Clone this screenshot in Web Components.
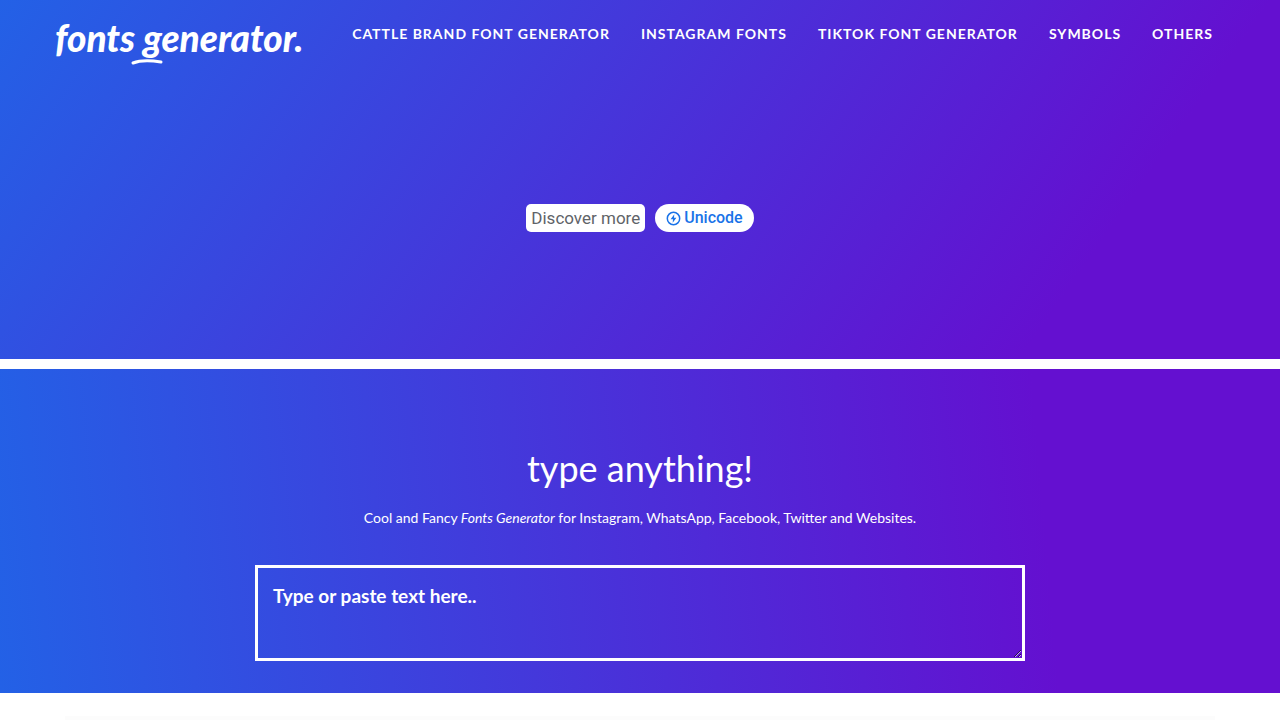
<!DOCTYPE html>
<html lang="en">
<head>
<meta charset="utf-8">
<meta name="viewport" content="width=device-width, initial-scale=1">
<title>Fonts Generator</title>
<style>
body { margin: 0; background: #fff; font-family: Lato, "Open Sans", sans-serif; color: #fff; overflow-x: hidden; }
</style>
</head>
<body>
<site-header>
  <site-logo slot="logo"></site-logo>
  <nav-link href="#cattle">CATTLE BRAND FONT GENERATOR</nav-link>
  <nav-link href="#instagram">INSTAGRAM FONTS</nav-link>
  <nav-link href="#tiktok">TIKTOK FONT GENERATOR</nav-link>
  <nav-link href="#symbols">SYMBOLS</nav-link>
  <nav-link href="#others">OTHERS</nav-link>
  <discover-bar slot="below"></discover-bar>
</site-header>
<type-hero></type-hero>
<result-panel></result-panel>

<script>
class BaseElement extends HTMLElement {
  connectedCallback() {
    if (!this.shadowRoot) this.attachShadow({ mode: "open" }).innerHTML = this.render();
  }
}

customElements.define("site-logo", class extends BaseElement {
  render() {
    return `<style>
      :host { display: block; }
      a { position: relative; display: block; width: 256px; color: #fff; text-decoration: none;
          font: italic 900 37px/56px Lato, sans-serif; white-space: nowrap; }
      svg { position: absolute; left: 0; top: 0; }
    </style>
    <a href="#home" aria-label="Fonts generator home">fonts generator.
      <svg width="256" height="64" viewBox="0 0 256 64" fill="none" stroke="#fff" stroke-linecap="round" aria-hidden="true">
        <path d="M78 53Q88 49 106 52" stroke-width="3"/>
      </svg>
    </a>`;
  }
});

customElements.define("nav-link", class extends BaseElement {
  render() {
    return `<style>
      :host { display: block; }
      a { color: #fff; text-decoration: none; font: 700 14px/20px Lato, sans-serif; letter-spacing: 1px; white-space: nowrap; }
    </style><a href="${this.getAttribute("href")}"><slot></slot></a>`;
  }
});

customElements.define("site-header", class extends BaseElement {
  render() {
    return `<style>
      :host { display: block; background: linear-gradient(125deg, #2361e6, #6410d0 83%); }
      header { display: flex; flex-direction: column; min-height: 359px; }
      .bar { display: flex; justify-content: space-between; align-items: flex-start; padding: 10px 67px 0 55px; }
      nav { display: flex; gap: 31px; padding-top: 13px; }
      .below { margin-top: 138px; }
    </style>
    <header>
      <div class="bar"><slot name="logo"></slot><nav aria-label="Main"><slot></slot></nav></div>
      <div class="below"><slot name="below"></slot></div>
    </header>`;
  }
});

customElements.define("discover-bar", class extends BaseElement {
  render() {
    return `<style>
      :host { display: flex; justify-content: center; align-items: center; gap: 10px; }
      span { background: #fff; color: #5f6368; border-radius: 5px; padding: 0 5px; font: 400 17px/28px Roboto, sans-serif; }
      button { display: flex; align-items: center; gap: 3px; height: 28px; padding: 0 11px; border: 0; border-radius: 14px;
        background: #fff; color: #1a73e8; font: 500 16px/28px Roboto, sans-serif; cursor: pointer; }
    </style>
    <span>Discover more</span>
    <button type="button">
      <svg width="15" height="15" viewBox="0 0 15 15" aria-hidden="true">
        <circle cx="7.5" cy="7.5" r="6.2" fill="none" stroke="#1a73e8" stroke-width="1.5"/>
        <path d="M8.3 3.2 4.6 8.3H7L6.7 11.8 10.4 6.7H8Z" fill="#1a73e8"/>
      </svg>Unicode</button>`;
  }
});

customElements.define("type-hero", class extends BaseElement {
  render() {
    return `<style>
      :host { display: block; margin-top: 10px; background: linear-gradient(85deg, #2361e6, #6410d0 81%); }
      section { display: flex; flex-direction: column; align-items: center; padding: 75px 20px 32px; }
      h1 { margin: 0; font: 400 36px/48px Lato, sans-serif; }
      p { margin: 16px 0 0; font: 400 14px/20px Lato, sans-serif; text-align: center; }
      textarea { display: block; box-sizing: border-box; width: 100%; max-width: 770px; height: 96px; margin-top: 37px;
        padding: 14px 15px; border: 3px solid #fff; border-radius: 0; background: transparent; color: #fff;
        font: 700 19px/28px Lato, sans-serif; resize: vertical; outline: none; }
      textarea::placeholder { color: #fff; opacity: 1; }
    </style>
    <section>
      <h1>type anything!</h1>
      <p>Cool and Fancy <em>Fonts Generator</em> for Instagram, WhatsApp, Facebook, Twitter and Websites.</p>
      <textarea aria-label="Your text" placeholder="Type or paste text here.."></textarea>
    </section>`;
  }
});

customElements.define("result-panel", class extends BaseElement {
  render() {
    return `<style>
      :host { display: block; padding: 23px 65px 0; }
      div { height: 4px; background: #fcfcfc; }
    </style><div></div>`;
  }
});
</script>
</body>
</html>
